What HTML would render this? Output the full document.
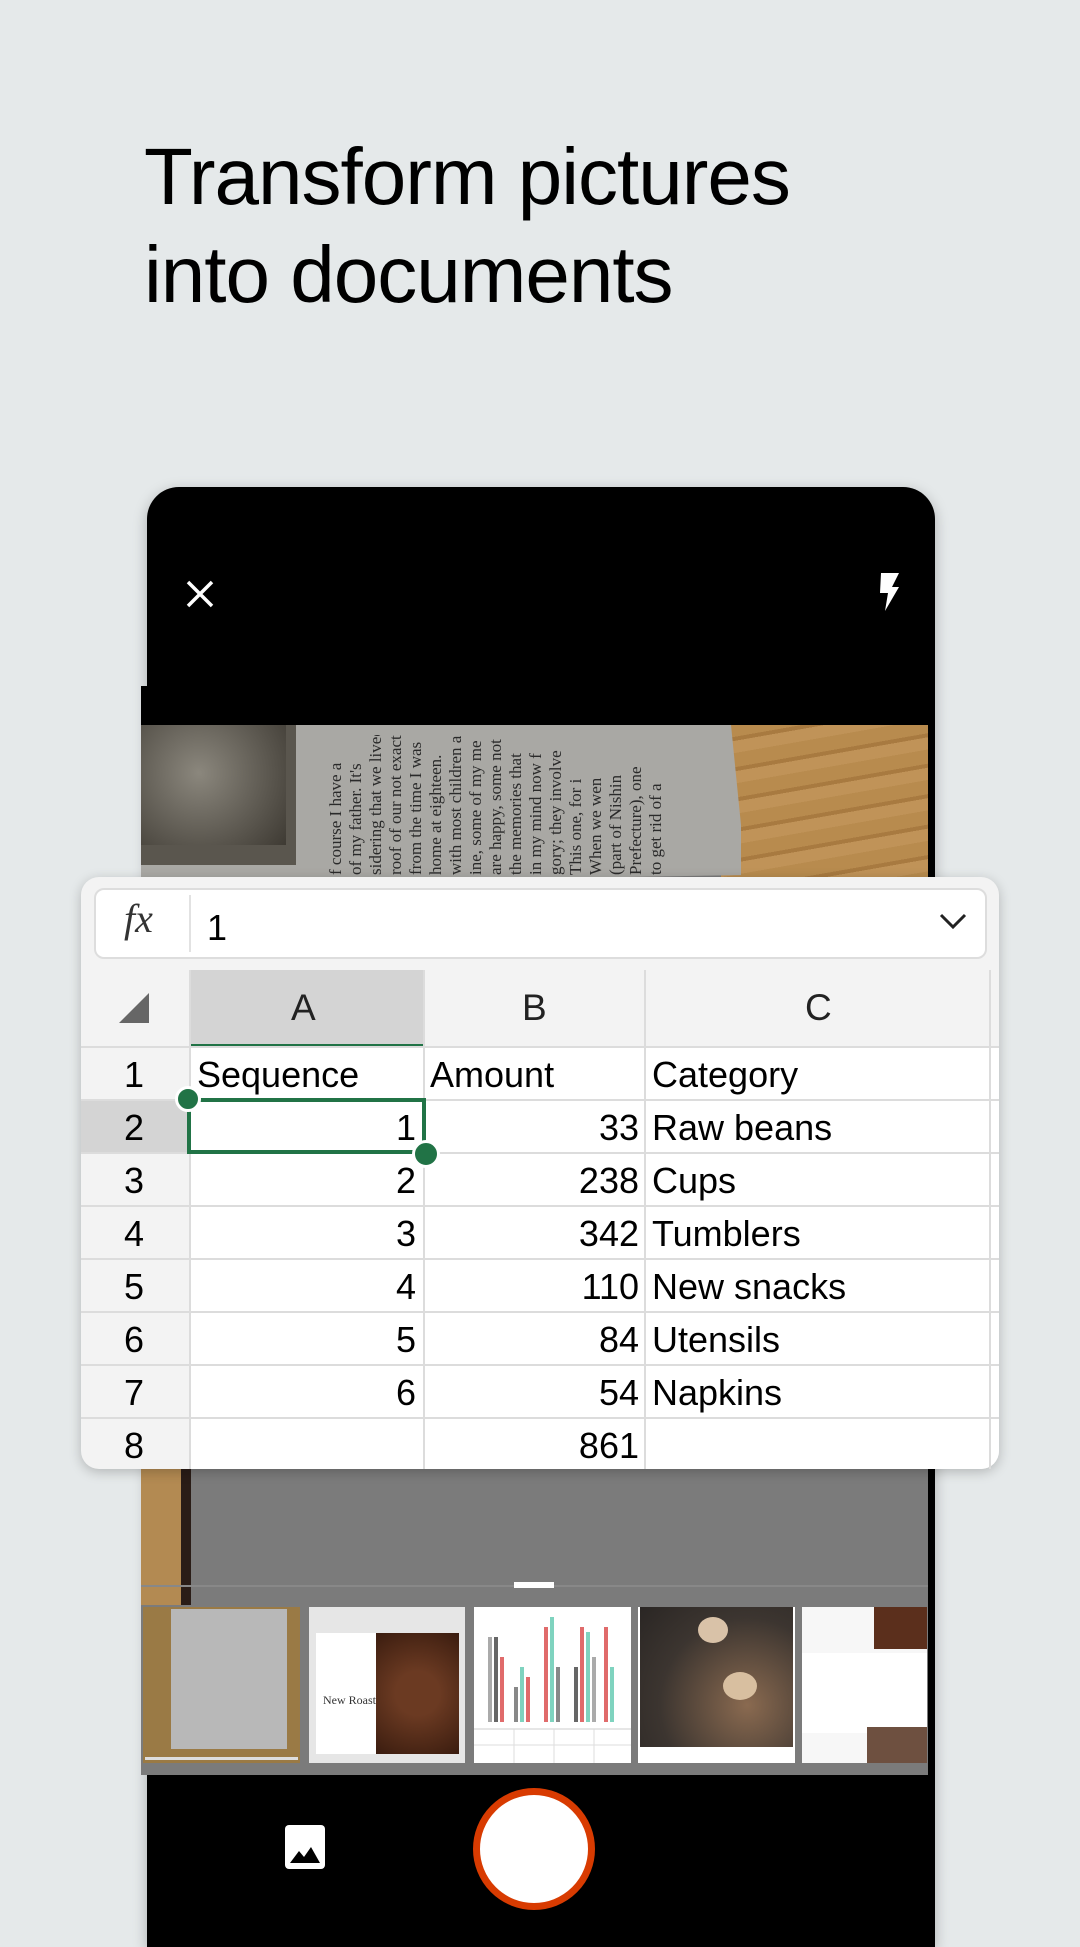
<!DOCTYPE html>
<html><head><meta charset="utf-8">
<style>
*{margin:0;padding:0;box-sizing:border-box}
body{width:1080px;height:1920px;background:#e5e9ea;position:relative;overflow:hidden;font-family:"Liberation Sans",sans-serif}
.title{position:absolute;left:144px;top:128px;font-size:80px;line-height:98px;color:#000;letter-spacing:-1px}
.phone{position:absolute;left:147px;top:487px;width:788px;height:1460px;background:#000;border-radius:32px 32px 0 0;box-shadow:0 4px 14px rgba(0,0,0,.25)}
.abs{position:absolute}
.cell{position:absolute;font-size:36px;color:#000;line-height:53px}
.hline{position:absolute;left:81px;width:918px;height:2px;background:#dcdcdc}
.vline{position:absolute;width:2px;background:#dcdcdc}
</style></head><body>
<div class="title">Transform pictures<br>into documents</div>

<div class="phone"></div>
<div class="abs" style="left:141px;top:686px;width:6px;height:40px;background:#000"></div>
<div class="abs" style="left:141px;top:725px;width:787px;height:1050px;background:#7b7b7b;overflow:hidden">
  <div class="abs" style="left:580px;top:0;width:207px;height:160px;background:repeating-linear-gradient(170deg,#b88b4e 0 14px,#a87a40 14px 18px,#c09358 18px 30px)"></div>
  <div class="abs" style="left:0;top:0;width:600px;height:160px;background:#a9a8a4;clip-path:polygon(0 0,590px 0,605px 150px,0 160px)"></div>
  <div class="abs" style="left:0;top:0;width:155px;height:140px;background:#5a564e"></div>
  <div class="abs" style="left:0;top:0;width:145px;height:120px;background:radial-gradient(circle at 40% 40%,#8b877d,#3e3a33)"></div>
  <div class="abs" style="left:185px;top:10px;width:370px;height:145px;overflow:hidden">
    <div style="transform:rotate(-90deg);transform-origin:0 0;position:absolute;left:0;top:140px;font-family:'Liberation Serif',serif;font-size:17px;line-height:20px;color:#2a2a2a;white-space:nowrap">
      f course I have a<br>of my father. It's<br>sidering that we lived<br>roof of our not exact<br>from the time I was<br>home at eighteen.<br>with most children a<br>ine, some of my me<br>are happy, some not<br>the memories that<br>in my mind now f<br>gory; they involve<br>This one, for i<br>When we wen<br>(part of Nishin<br>Prefecture), one<br>to get rid of a</div>
  </div>
  <div class="abs" style="left:0;top:740px;width:40px;height:140px;background:#b38a52"></div>
  <div class="abs" style="left:40px;top:740px;width:10px;height:140px;background:#2a1d17"></div>
  <div class="abs" style="left:0;top:860px;width:787px;height:2px;background:#888"></div>
</div>
<div class="abs" style="left:514px;top:1582px;width:40px;height:6px;background:#fff"></div>
<div class="abs" style="left:143px;top:1607px;width:157px;height:156px;background:#9a7a45">
  <div class="abs" style="left:28px;top:2px;width:116px;height:140px;background:#b8b8b8"></div>
  <div class="abs" style="left:2px;top:150px;width:153px;height:3px;background:#ddd"></div>
</div>
<div class="abs" style="left:309px;top:1607px;width:156px;height:156px;background:#e6e6e6">
  <div class="abs" style="left:7px;top:26px;width:143px;height:121px;background:#fff"></div>
  <div class="abs" style="left:67px;top:26px;width:83px;height:121px;background:radial-gradient(circle,#6b3a22 30%,#3a1c0f)"></div>
  <div class="abs" style="left:14px;top:86px;font-family:'Liberation Serif',serif;font-size:12px;color:#333">New Roast</div>
</div>
<div class="abs" style="left:474px;top:1607px;width:157px;height:156px;background:#fff">
  <svg width="157" height="156">
    <g>
      <rect x="14" y="30" width="4" height="85" fill="#aaa"/><rect x="20" y="30" width="4" height="85" fill="#666"/><rect x="26" y="50" width="4" height="65" fill="#e06b6b"/>
      <rect x="40" y="80" width="4" height="35" fill="#888"/><rect x="46" y="60" width="4" height="55" fill="#7fd3bf"/><rect x="52" y="70" width="4" height="45" fill="#e06b6b"/>
      <rect x="70" y="20" width="4" height="95" fill="#e06b6b"/><rect x="76" y="10" width="4" height="105" fill="#7fd3bf"/><rect x="82" y="60" width="4" height="55" fill="#888"/>
      <rect x="100" y="60" width="4" height="55" fill="#666"/><rect x="106" y="20" width="4" height="95" fill="#e06b6b"/><rect x="112" y="25" width="4" height="90" fill="#7fd3bf"/><rect x="118" y="50" width="4" height="65" fill="#aaa"/>
      <rect x="130" y="20" width="4" height="95" fill="#e06b6b"/><rect x="136" y="60" width="4" height="55" fill="#7fd3bf"/>
    </g>
    <line x1="0" y1="122" x2="157" y2="122" stroke="#ccc"/>
    <line x1="0" y1="138" x2="157" y2="138" stroke="#ddd"/>
    <line x1="40" y1="122" x2="40" y2="156" stroke="#ddd"/><line x1="80" y1="122" x2="80" y2="156" stroke="#ddd"/><line x1="120" y1="122" x2="120" y2="156" stroke="#ddd"/>
  </svg>
</div>
<div class="abs" style="left:638px;top:1607px;width:157px;height:156px;background:#fff">
  <div class="abs" style="left:2px;top:0;width:153px;height:140px;background:radial-gradient(circle at 70% 70%,#8a6a50,#3c3530 60%,#2a2624)"></div>
  <div class="abs" style="left:60px;top:10px;width:30px;height:26px;border-radius:50%;background:#d9c2a8"></div>
  <div class="abs" style="left:85px;top:65px;width:34px;height:28px;border-radius:50%;background:#d8bfa0"></div>
</div>
<div class="abs" style="left:802px;top:1607px;width:125px;height:156px;background:#f7f7f7">
  <div class="abs" style="left:72px;top:0;width:53px;height:42px;background:#5b2f1c"></div>
  <div class="abs" style="left:0;top:46px;width:125px;height:80px;background:#fff"></div>
  <div class="abs" style="left:65px;top:120px;width:60px;height:36px;background:#6e5040"></div>
</div>
<svg class="abs" style="left:285px;top:1825px" width="40" height="44" viewBox="0 0 40 44">
  <rect x="0" y="0" width="40" height="44" rx="4" fill="#fff"/>
  <path d="M5 38 L14 26 L19 32 L26 22 L35 38 Z" fill="#000"/>
</svg>
<div class="abs" style="left:473px;top:1788px;width:122px;height:122px;border-radius:50%;background:#fff;border:7px solid #d83b01"></div>
<svg class="abs" style="left:186px;top:580px" width="28" height="28" viewBox="0 0 28 28"><path d="M2 2 L26 26 M26 2 L2 26" stroke="#fff" stroke-width="3.5"/></svg>
<svg class="abs" style="left:877px;top:573px" width="24" height="38" viewBox="0 0 24 38"><path d="M4 0 H22 L15 14 H22 L8 38 L11 20 H3 Z" fill="#fff"/></svg>

<div class="abs" style="left:81px;top:877px;width:918px;height:592px;background:#f3f3f3;border-radius:18px;box-shadow:0 3px 12px rgba(0,0,0,.22);overflow:hidden">
  <div class="abs" style="left:13px;top:11px;width:893px;height:71px;background:#fff;border:2px solid #ddd;border-radius:10px"></div>
  <div class="abs" style="left:108px;top:18px;width:2px;height:57px;background:#e2e2e2"></div>
  <div class="abs" style="left:43px;top:18px;font-family:'Liberation Serif',serif;font-style:italic;font-size:40px;color:#333">fx</div>
  <div class="abs" style="left:126px;top:30px;font-size:36px">1</div>
  <svg class="abs" style="left:858px;top:35px" width="28" height="18" viewBox="0 0 28 18"><path d="M2 3 L14 15 L26 3" stroke="#222" stroke-width="3" fill="none"/></svg>
  <div class="abs" style="left:109px;top:93px;width:235px;height:77px;background:#d4d4d4"></div>
  <div class="abs" style="left:109px;top:167px;width:235px;height:4px;background:#217346"></div>
  <svg class="abs" style="left:38px;top:116px" width="30" height="30"><path d="M30 0 V30 H0 Z" fill="#666"/></svg>
  <div class="abs" style="left:210px;top:110px;font-size:37px;color:#222">A</div>
  <div class="abs" style="left:441px;top:110px;font-size:37px;color:#222">B</div>
  <div class="abs" style="left:724px;top:110px;font-size:37px;color:#222">C</div>
  <div class="abs" style="left:109px;top:170px;width:809px;height:422px;background:#fff"></div>
  <div class="abs" style="left:0;top:223px;width:109px;height:53px;background:#d4d4d4"></div>
</div>
<div class="vline" style="left:189px;top:970px;height:499px"></div>
<div class="vline" style="left:423px;top:970px;height:499px"></div>
<div class="vline" style="left:644px;top:970px;height:499px"></div>
<div class="vline" style="left:989px;top:970px;height:499px"></div>
<div class="hline" style="top:1046px"></div>
<div class="hline" style="top:1099px"></div>
<div class="hline" style="top:1152px"></div>
<div class="hline" style="top:1205px"></div>
<div class="hline" style="top:1258px"></div>
<div class="hline" style="top:1311px"></div>
<div class="hline" style="top:1364px"></div>
<div class="hline" style="top:1417px"></div>
<div class="cell" style="left:124px;top:1048px">1</div>
<div class="cell" style="left:124px;top:1101px">2</div>
<div class="cell" style="left:124px;top:1154px">3</div>
<div class="cell" style="left:124px;top:1207px">4</div>
<div class="cell" style="left:124px;top:1260px">5</div>
<div class="cell" style="left:124px;top:1313px">6</div>
<div class="cell" style="left:124px;top:1366px">7</div>
<div class="cell" style="left:124px;top:1419px">8</div>
<div class="cell" style="left:197px;top:1048px">Sequence</div>
<div class="cell" style="left:190px;width:226px;text-align:right;top:1101px">1</div>
<div class="cell" style="left:190px;width:226px;text-align:right;top:1154px">2</div>
<div class="cell" style="left:190px;width:226px;text-align:right;top:1207px">3</div>
<div class="cell" style="left:190px;width:226px;text-align:right;top:1260px">4</div>
<div class="cell" style="left:190px;width:226px;text-align:right;top:1313px">5</div>
<div class="cell" style="left:190px;width:226px;text-align:right;top:1366px">6</div>
<div class="cell" style="left:430px;top:1048px">Amount</div>
<div class="cell" style="left:424px;width:215px;text-align:right;top:1101px">33</div>
<div class="cell" style="left:424px;width:215px;text-align:right;top:1154px">238</div>
<div class="cell" style="left:424px;width:215px;text-align:right;top:1207px">342</div>
<div class="cell" style="left:424px;width:215px;text-align:right;top:1260px">110</div>
<div class="cell" style="left:424px;width:215px;text-align:right;top:1313px">84</div>
<div class="cell" style="left:424px;width:215px;text-align:right;top:1366px">54</div>
<div class="cell" style="left:424px;width:215px;text-align:right;top:1419px">861</div>
<div class="cell" style="left:652px;top:1048px">Category</div>
<div class="cell" style="left:652px;top:1101px">Raw beans</div>
<div class="cell" style="left:652px;top:1154px">Cups</div>
<div class="cell" style="left:652px;top:1207px">Tumblers</div>
<div class="cell" style="left:652px;top:1260px">New snacks</div>
<div class="cell" style="left:652px;top:1313px">Utensils</div>
<div class="cell" style="left:652px;top:1366px">Napkins</div>
<div class="abs" style="left:187px;top:1098px;width:239px;height:56px;border:4px solid #217346"></div>
<div class="abs" style="left:175px;top:1086px;width:26px;height:26px;border-radius:50%;background:#217346;border:3px solid #fff"></div>
<div class="abs" style="left:412px;top:1140px;width:28px;height:28px;border-radius:50%;background:#217346;border:3px solid #fff"></div>
</body></html>
